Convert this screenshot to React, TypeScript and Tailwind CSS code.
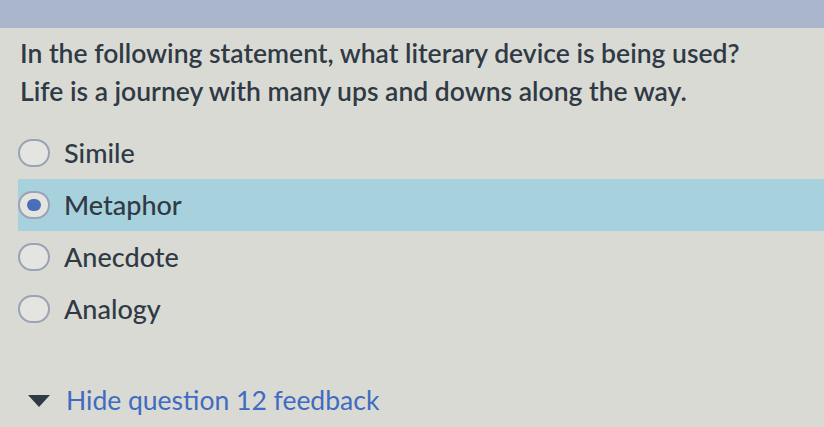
const options = ["Simile", "Metaphor", "Anecdote", "Analogy"];

function Radio({ checked }: { checked: boolean }) {
  return (
    <span className="flex h-[28px] w-[32px] shrink-0 items-center justify-center rounded-full border-2 border-[#9aa3b5] bg-[#e4e4e0]">
      {checked && <span className="h-[12px] w-[14px] rounded-full bg-[#4a6fb8]" />}
    </span>
  );
}

export default function App() {
  return (
    <div className="h-[427px] w-[824px] overflow-hidden bg-[#dadad5] font-['Lato','Noto_Sans',sans-serif] text-[#2f3a45]">
      <div className="h-[28px] bg-[#a9b6cc]" />
      <div className="pl-[20px] pt-[6px] text-[26.5px] font-semibold leading-[38px]">
        <p>In the following statement, what literary device is being used?</p>
        <p>Life is a journey with many ups and downs along the way.</p>
      </div>
      <ul className="mt-[17px] flex flex-col">
        {options.map((o) => {
          const checked = o === "Metaphor";
          return (
            <li
              key={o}
              className={
                "ml-[18px] flex h-[52px] items-center gap-[14px] text-[27px] font-medium " +
                (checked ? "bg-[#a8d1de]" : "")
              }
            >
              <Radio checked={checked} />
              <span>{o}</span>
            </li>
          );
        })}
      </ul>
      <div className="mt-[51px] flex h-[30px] items-center gap-[16px] pl-[28px] text-[26.5px] text-[#3f6cc0]">
        <svg width="22" height="13" viewBox="0 0 22 13">
          <polygon points="0,0 22,0 11,12" fill="#2f3a45" />
        </svg>
        <span>Hide question 12 feedback</span>
      </div>
    </div>
  );
}
